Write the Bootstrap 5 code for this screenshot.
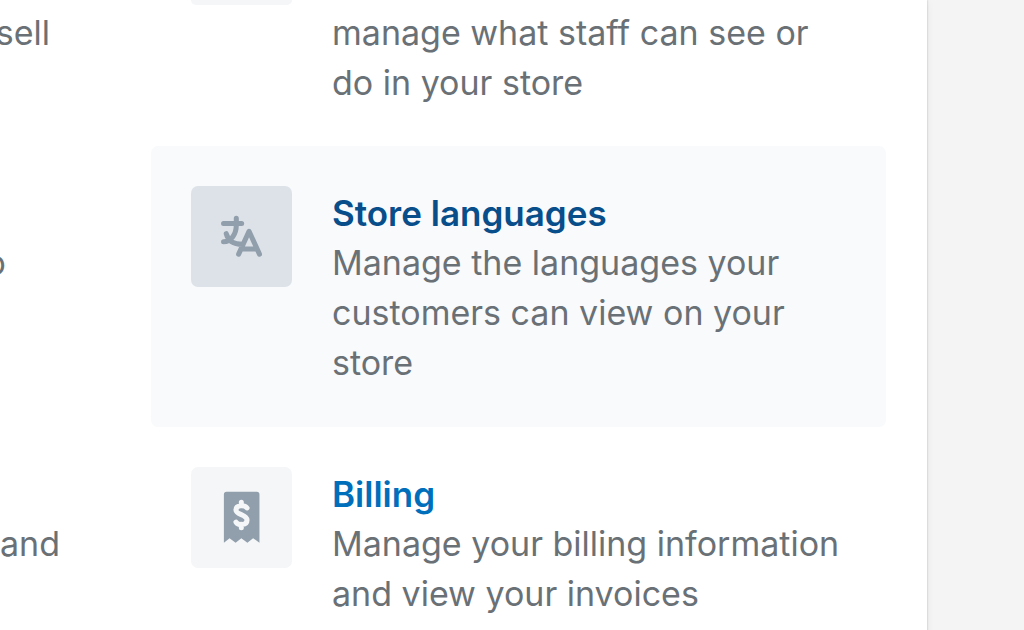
<!DOCTYPE html>
<html lang="en">
<head>
<meta charset="utf-8">
<meta name="viewport" content="width=device-width, initial-scale=1">
<title>Settings</title>
<link href="https://cdn.jsdelivr.net/npm/bootstrap@5.3.0/dist/css/bootstrap.min.css" rel="stylesheet">
<style>
body { background: #f4f4f4; color: #6a7176; font-family: Inter, "Liberation Sans", sans-serif; font-size: 34px; line-height: 50px; overflow: hidden; }
.panel { background: #fff; margin-right: 97px; padding-right: 41px; box-shadow: 0 0 2px rgba(0,0,0,.24), 0 2px 8px rgba(0,0,0,.06); }
.side { flex: 0 0 151px; padding-top: 42px; white-space: nowrap; overflow: hidden; display: flex; justify-content: flex-end; }
.end-near { padding-right: 91px; }
.end-mid { padding-right: 101px; }
.end-far { padding-right: 145px; }
.setting { gap: 40px; padding: 40px 40px 39px; border-radius: 7px; min-width: 0; }
.setting.active { background: #f9fafc; }
.copy { padding-top: 2px; }
.tile { flex: 0 0 101px; height: 101px; border-radius: 7px; background: #f4f6f8; }
.active .tile { background: #dde2e9; }
.tile svg { display: block; width: 101px; height: 101px; }
.setting a { color: #006fbb; font-size: 35px; font-weight: 600; text-decoration: none; }
.setting.active a { color: #084e8a; }
.first-row .side { padding-top: 8px; }
.first-row .setting { padding-top: 0; padding-bottom: 38px; }
.first-row .tile { height: 5px; border-radius: 0 0 7px 7px; }
.first-row p { padding-top: 8px; }
</style>
</head>
<body>
<main class="panel min-vh-100">
  <div class="d-flex first-row">
    <div class="side end-mid">sell</div>
    <div class="setting d-flex flex-fill">
      <div class="tile"></div>
      <p class="mb-0">manage what staff can see or do in your store</p>
    </div>
  </div>
  <div class="d-flex">
    <div class="side end-far"><p class="mb-0"><br>to</p></div>
    <div class="setting active d-flex flex-fill">
      <div class="tile">
        <svg viewBox="34 34 301 301" fill="none" stroke="#919eab" stroke-width="15" stroke-linecap="round" stroke-linejoin="round" aria-hidden="true">
          <path d="M131 146H185M169 130V150C169 177 154 200 131 200M139 176C144 196 159 208 187 208M176 237L207 169L238 237M190 222H226"/>
        </svg>
      </div>
      <div class="copy"><a class="d-block" href="#languages">Store languages</a><p class="mb-0">Manage the languages your customers can view on your store</p></div>
    </div>
  </div>
  <div class="d-flex">
    <div class="side end-near"><p class="mb-0"><br>and</p></div>
    <div class="setting d-flex flex-fill">
      <div class="tile">
        <svg viewBox="34 37 301 301" fill="none" aria-hidden="true">
          <path fill="#919eab" d="M132 119Q132 111 140 111H230Q238 111 238 119V263L219 249L202 263L184 249L167 263L149 249L132 263Z"/>
          <path stroke="#f4f6f8" stroke-width="15" stroke-linecap="round" stroke-linejoin="round" d="M184 142V151M184 208V218M201 159C194 150 168 149 168 165C168 180 201 178 201 195C201 212 175 212 168 201"/>
        </svg>
      </div>
      <div class="copy"><a class="d-block" href="#billing">Billing</a><p class="mb-0">Manage your billing information and view your invoices</p></div>
    </div>
  </div>
</main>
<script src="https://cdn.jsdelivr.net/npm/bootstrap@5.3.0/dist/js/bootstrap.bundle.min.js"></script>
</body>
</html>
